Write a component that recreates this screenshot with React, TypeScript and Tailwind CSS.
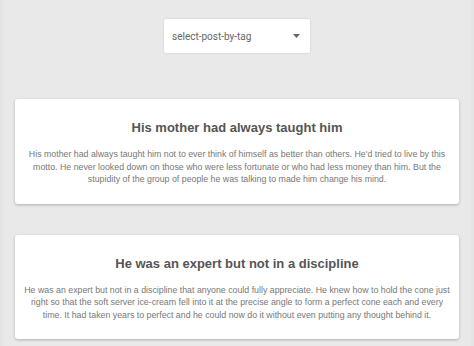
import React from "react";

const posts = [
  {
    title: "His mother had always taught him",
    body: "His mother had always taught him not to ever think of himself as better than others. He'd tried to live by this motto. He never looked down on those who were less fortunate or who had less money than him. But the stupidity of the group of people he was talking to made him change his mind.",
  },
  {
    title: "He was an expert but not in a discipline",
    body: "He was an expert but not in a discipline that anyone could fully appreciate. He knew how to hold the cone just right so that the soft server ice-cream fell into it at the precise angle to form a perfect cone each and every time. It had taken years to perfect and he could now do it without even putting any thought behind it.",
  },
];

const PostCard = ({ title, body }: { title: string; body: string }) => (
  <div className="bg-white rounded-[3px] shadow-[0_1px_3px_rgba(0,0,0,0.25)] px-[7px] pt-[21px] pb-[18px] text-center">
    <h2 className="text-[13px] font-bold text-[#555] leading-[16px]">{title}</h2>
    <p className="mt-[12px] text-[8.8px] leading-[12.5px] text-[#777]">{body}</p>
  </div>
);

export default function App() {
  return (
    <div className="min-h-[346px] w-full bg-[#e4e4e4] font-['Liberation_Sans',Arial,sans-serif]">
      <div className="ml-[3px] w-[468px] min-h-[346px] bg-[#e9e9e9] px-[12px] pt-[19px]">
        <div className="flex justify-center">
          <div className="flex items-center justify-between w-[146px] h-[34px] bg-white rounded-[2px] shadow-[0_0_2px_rgba(0,0,0,0.15)] pl-[8px] pr-[10px] font-['Roboto',sans-serif] text-[10px] text-[#666]">
            <span>select-post-by-tag</span>
            <svg width="7" height="4" viewBox="0 0 7 4">
              <path d="M0 0 L7 0 L3.5 4 Z" fill="#666" />
            </svg>
          </div>
        </div>
        <div className="mt-[46px] flex flex-col gap-[31px]">
          {posts.map((p) => (
            <PostCard key={p.title} title={p.title} body={p.body} />
          ))}
        </div>
      </div>
    </div>
  );
}
